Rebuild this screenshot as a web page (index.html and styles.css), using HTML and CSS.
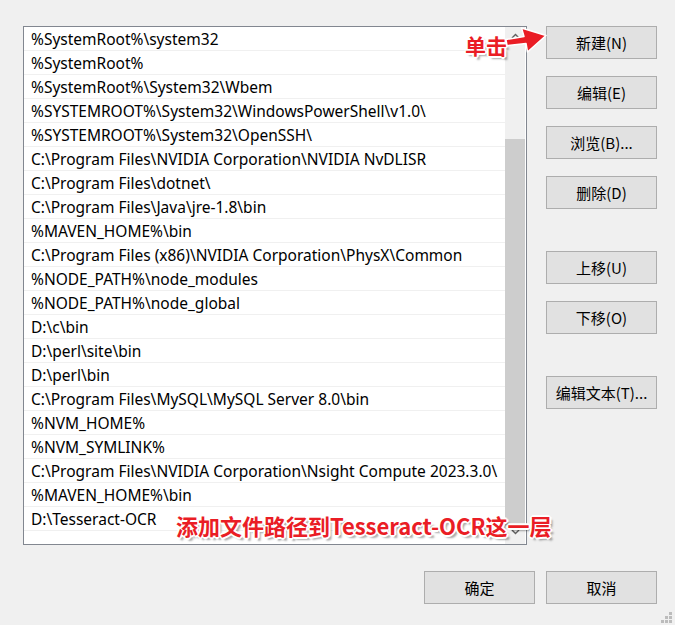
FILE: index.html
```html
<!DOCTYPE html>
<html lang="zh-CN">
<head>
<meta charset="utf-8">
<title>编辑环境变量</title>
<link rel="stylesheet" href="styles.css">
</head>
<body>
<div class="dialog">
  <div class="main">
    <div class="listbox">
      <div class="rows">
        <div class="row">%SystemRoot%\system32</div>
        <div class="row">%SystemRoot%</div>
        <div class="row">%SystemRoot%\System32\Wbem</div>
        <div class="row">%SYSTEMROOT%\System32\WindowsPowerShell\v1.0\</div>
        <div class="row">%SYSTEMROOT%\System32\OpenSSH\</div>
        <div class="row">C:\Program Files\NVIDIA Corporation\NVIDIA NvDLISR</div>
        <div class="row">C:\Program Files\dotnet\</div>
        <div class="row">C:\Program Files\Java\jre-1.8\bin</div>
        <div class="row">%MAVEN_HOME%\bin</div>
        <div class="row">C:\Program Files (x86)\NVIDIA Corporation\PhysX\Common</div>
        <div class="row">%NODE_PATH%\node_modules</div>
        <div class="row">%NODE_PATH%\node_global</div>
        <div class="row">D:\c\bin</div>
        <div class="row">D:\perl\site\bin</div>
        <div class="row">D:\perl\bin</div>
        <div class="row">C:\Program Files\MySQL\MySQL Server 8.0\bin</div>
        <div class="row">%NVM_HOME%</div>
        <div class="row">%NVM_SYMLINK%</div>
        <div class="row">C:\Program Files\NVIDIA Corporation\Nsight Compute 2023.3.0\</div>
        <div class="row">%MAVEN_HOME%\bin</div>
        <div class="row">D:\Tesseract-OCR</div>
      </div>
      <div class="scrollbar">
        <div class="sb-btn">
          <svg width="9" height="6" viewBox="0 0 9 6"><path d="M1 5 L4.5 1.5 L8 5" fill="none" stroke="#606060" stroke-width="1.4"/></svg>
        </div>
        <div class="track"><div class="thumb"></div></div>
        <div class="sb-btn down">
          <svg width="9" height="6" viewBox="0 0 9 6"><path d="M1 1 L4.5 4.5 L8 1" fill="none" stroke="#606060" stroke-width="1.4"/></svg>
        </div>
      </div>
    </div>
    <div class="side">
      <button class="btn">新建(N)</button>
      <button class="btn">编辑(E)</button>
      <button class="btn">浏览(B)...</button>
      <button class="btn">删除(D)</button>
      <button class="btn sep">上移(U)</button>
      <button class="btn">下移(O)</button>
      <button class="btn sep">编辑文本(T)...</button>
    </div>
  </div>
  <div class="footer">
    <button class="btn">确定</button>
    <button class="btn">取消</button>
  </div>
  <div class="grip">
    <span class="g g1"></span><span class="g g2"></span><span class="g g3"></span>
    <span class="g g4"></span><span class="g g5"></span><span class="g g6"></span>
  </div>
  <div class="note note-click">单击</div>
  <svg class="red-arrow" width="46" height="30" viewBox="0 0 46 30">
    <path d="M2 14.5 L20 11.5 L17.5 3 L42 10.5 L23.5 27 L22 18.5 L3 20.5 Z" fill="#ea1d25" stroke="#ffffff" stroke-width="1.5" stroke-linejoin="round"/>
  </svg>
  <div class="note note-path">添加文件路径到Tesseract-OCR这一层</div>
</div>
</body>
</html>
```
FILE: styles.css
```css
html, body {
  margin: 0;
  padding: 0;
}
body {
  background: #f0f0f0;
  width: 675px;
  height: 625px;
  overflow: hidden;
  font-family: "Noto Sans", "Noto Sans CJK SC", sans-serif;
}
.dialog {
  position: relative;
  width: 675px;
  height: 625px;
  box-sizing: border-box;
  padding: 26px 18px 0 23px;
}
.main {
  display: flex;
  gap: 19px;
}
.listbox {
  width: 504px;
  height: 519px;
  box-sizing: border-box;
  border: 1px solid #828790;
  background: #ffffff;
  display: flex;
}
.rows {
  width: 481px;
}
.row {
  height: 23px;
  border-bottom: 1px solid #f0f0f0;
  padding-left: 7px;
  font-size: 15.5px;
  line-height: 25px;
  color: #000;
  white-space: nowrap;
  overflow: hidden;
}
.scrollbar {
  width: 20px;
  background: #f0f0f0;
  display: flex;
  flex-direction: column;
  margin-right: 1px;
}
.sb-btn {
  height: 18px;
  display: flex;
  align-items: center;
  justify-content: center;
}
.sb-btn.down {
  align-items: flex-start;
  padding-top: 3px;
  height: 15px;
}
.track {
  flex: 1;
  display: flex;
  flex-direction: column;
}
.thumb {
  margin-top: 94px;
  flex: 1;
  background: #cdcdcd;
}
.side {
  display: flex;
  flex-direction: column;
  gap: 17px;
}
.btn {
  width: 111px;
  height: 33px;
  box-sizing: border-box;
  border: 1px solid #adadad;
  background: #e1e1e1;
  font-family: "Noto Sans CJK SC", sans-serif;
  font-size: 15px;
  color: #000;
  padding: 0;
  margin: 0;
}
.btn.sep {
  margin-top: 25px;
}
.footer {
  display: flex;
  justify-content: flex-end;
  gap: 11px;
  margin-top: 26px;
}
.grip {
  position: absolute;
  right: 3px;
  bottom: 2px;
  width: 11px;
  height: 11px;
}
.g {
  position: absolute;
  width: 3px;
  height: 3px;
  background: #bcbcbc;
}
.g1 { right: 0; top: 0; }
.g2 { right: 0; top: 4px; }
.g3 { right: 4px; top: 4px; }
.g4 { right: 0; top: 8px; }
.g5 { right: 4px; top: 8px; }
.g6 { right: 8px; top: 8px; }
.note {
  position: absolute;
  font-family: "Noto Sans CJK SC", sans-serif;
  font-weight: 700;
  font-size: 22px;
  line-height: 22px;
  color: #ea1d25;
  white-space: nowrap;
  text-shadow:
    -1px -1px 0 #fff, 1px -1px 0 #fff, -1px 1px 0 #fff, 1px 1px 0 #fff,
    0 -2px 0 #fff, 0 2px 0 #fff, -2px 0 0 #fff, 2px 0 0 #fff,
    3px 3px 2px rgba(0,0,0,0.35);
}
.note-click {
  left: 465px;
  top: 34px;
  font-size: 21px;
}
.note-path {
  left: 176px;
  top: 514px;
}
.red-arrow {
  position: absolute;
  left: 504px;
  top: 25px;
}
```
